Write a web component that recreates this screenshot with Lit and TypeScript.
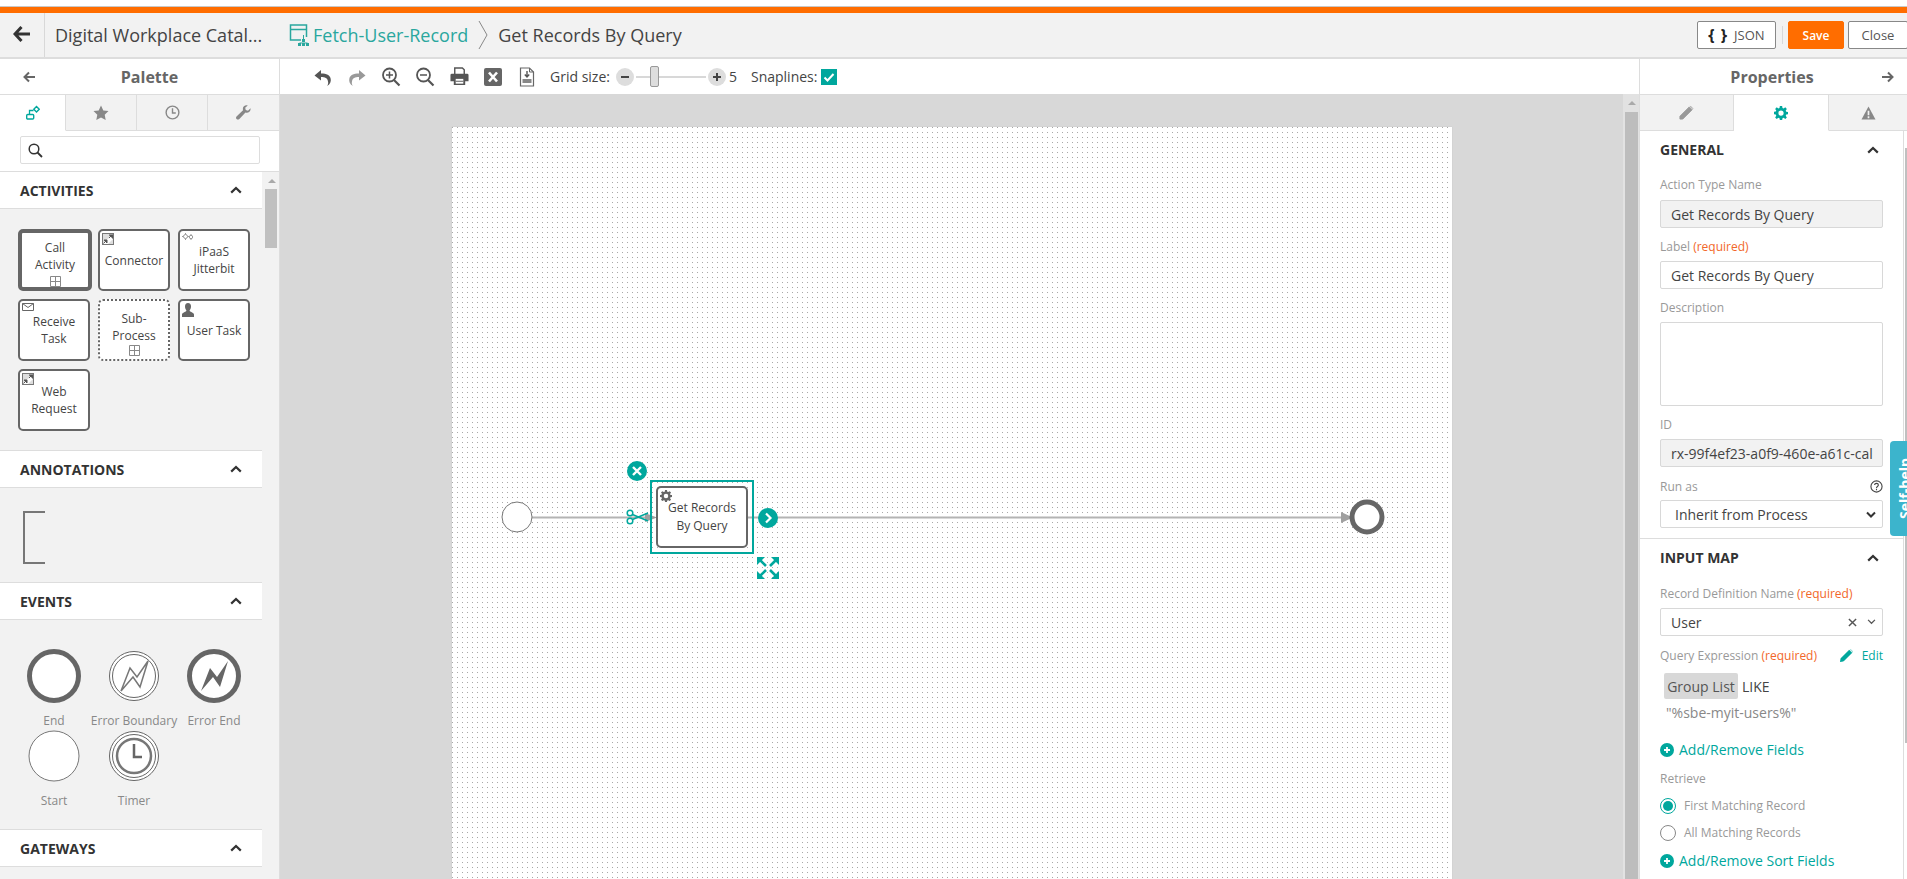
import { LitElement, html, css, svg } from "lit";
import { customElement } from "lit/decorators.js";

const chevUp = html`<svg class="chev" viewBox="0 0 12 8" width="12" height="8"><path d="M1.200 6.600 6 2l4.800 4.600" fill="none" stroke="#333" stroke-width="2.200"/></svg>`;

const expand = html`<svg class="expand" viewBox="0 0 11 11" width="11" height="11"><path d="M.5.5h10v10H.5zM5.500.5v10M.5 5.500h10" fill="none" stroke="#888" stroke-width="1"/></svg>`;
const connIcon = html`<svg class="ticon" viewBox="0 0 12 12" width="12" height="12"><rect width="12" height="12" fill="#777"/><rect x="1" y="1" width="10" height="10" fill="#ddd"/><path d="M1 11 11 1v5L6 11z" fill="#fff"/><path d="M1.500 10.500 5 7M2 7l3 0v3zM7 5l3.500-3.500M7 2h3.500v3.500" fill="#555" stroke="#555"/></svg>`;
const gearOutline = html`<svg class="ticon" viewBox="0 0 12 7" width="12" height="7"><g fill="none" stroke="#999" stroke-width="1"><circle cx="3.500" cy="3.500" r="2"/><circle cx="9" cy="4" r="1.700"/><path d="M3.500 0v1.500M3.500 5.500V7M0 3.500h1.500M5.500 3.500H7M9 1v1M9 6v1"/></g></svg>`;
const envelope = html`<svg class="ticon" viewBox="0 0 12 8" width="12" height="8"><path d="M.5.5h11v7H.5zM.5.5 6 4.500 11.500.5" fill="#fff" stroke="#666"/></svg>`;
const person = html`<svg class="ticon" viewBox="0 0 12 14" width="12" height="14"><path d="M6 0c2 0 3 1.500 3 3.500S8 7 7.500 7.800c0 1 4.500 1.700 4.500 3.700V14H0v-2.500c0-2 4.500-2.700 4.500-3.700C4 7 3 5.500 3 3.500S4 0 6 0z" fill="#666"/></svg>`;

const tiles = [
  { label: ["Call", "Activity"], kind: "call", exp: true },
  { label: ["Connector"], icon: connIcon, kind: "" },
  { label: ["iPaaS", "Jitterbit"], icon: gearOutline, kind: "" },
  { label: ["Receive", "Task"], icon: envelope, kind: "" },
  { label: ["Sub-", "Process"], kind: "sub", exp: true },
  { label: ["User Task"], icon: person, kind: "" },
  { label: ["Web", "Request"], icon: connIcon, kind: "" },
];

const eventIcons: Record<string, any> = {
  End: svg`<circle cx="27" cy="27" r="24.500" fill="#fff" stroke="#666" stroke-width="5"/>`,
  "Error Boundary": svg`<circle cx="27" cy="27" r="24.500" fill="#fff" stroke="#666" stroke-width="1"/><circle cx="27" cy="27" r="21.500" fill="#fff" stroke="#666" stroke-width="1"/><path d="M14 42 23 19l7 9 11-16-8 26-7-10z" fill="#fff" stroke="#777" stroke-width="1.500"/>`,
  "Error End": svg`<circle cx="27" cy="27" r="24.500" fill="#fff" stroke="#666" stroke-width="5"/><path d="M14 42 23 19l7 9 11-16-8 26-7-10z" fill="#666"/>`,
  Start: svg`<circle cx="27" cy="27" r="25" fill="#fff" stroke="#777" stroke-width="1"/>`,
  Timer: svg`<circle cx="27" cy="27" r="24.500" fill="#fff" stroke="#666" stroke-width="1"/><circle cx="27" cy="27" r="21.500" fill="#fff" stroke="#666" stroke-width="1"/><circle cx="27" cy="27" r="17" fill="#fff" stroke="#777" stroke-width="2.500"/><path d="M27 15v13h8" fill="none" stroke="#666" stroke-width="2.500"/>`,
};

const gear = (c: string, s: number) => html`<svg viewBox="0 0 16 16" width=${s} height=${s}><path fill=${c} fill-rule="evenodd" d="M6.700 0h2.600l.4 2.200 1.300.6L12.900 1.500l1.800 1.800-1.300 1.900.6 1.300 2 .3v2.600l-2 .4-.6 1.300 1.300 1.900-1.800 1.800-1.900-1.300-1.300.6-.4 2H6.700l-.4-2-1.300-.6-1.900 1.300-1.800-1.800 1.300-1.900-.6-1.300L0 9.300V6.700l2-.3.600-1.300L1.300 3.300l1.800-1.800L5 2.800l1.300-.6zM8 5a3 3 0 1 0 0 6 3 3 0 0 0 0-6z"/></svg>`;

const plusCircle = html`<svg viewBox="0 0 14 14" width="14" height="14"><circle cx="7" cy="7" r="7" fill="#00a79d"/><path d="M7 4v6M4 7h6" stroke="#fff" stroke-width="1.800"/></svg>`;

@customElement("app-root")
export class AppRoot extends LitElement {
  static styles = css`
    :host {
      display: flex;
      flex-direction: column;
      width: 100%;
      height: 100vh;
      overflow: hidden;
      font-family: "Open Sans", "Noto Sans", sans-serif;
      color: #333;
      background: #fff;
    }
    .topline { height: 7px; flex: none; border-bottom: 1px solid #c8c8c8; box-sizing: border-box; background: #fff; }
    .orange { height: 6px; flex: none; background: #ff6d00; }
    .header {
      height: 46px; flex: none; box-sizing: border-box; display: flex; align-items: center;
      background: #f2f2f2; border-bottom: 2px solid #ddd;
    }
    .back { width: 45px; height: 100%; flex: none; display: flex; align-items: center; justify-content: center; border-right: 1px solid #d8d8d8; box-sizing: border-box; padding-bottom: 2px; }
    .title { font-size: 18px; color: #444; margin-left: 10px; width: 209px; white-space: nowrap; }
    .crumb-ic { margin-left: 25px; width: 20px; height: 24px; flex: none; }
    .link { font-size: 18px; color: #2aa79e; margin-left: 4px; white-space: nowrap; }
    .sep { margin: 0 10px 0 10px; flex: none; }
    .cur { font-size: 18px; color: #444; white-space: nowrap; }
    .spacer { flex: 1; }
    .btn {
      height: 28px; box-sizing: border-box; font-size: 12px; display: flex; align-items: center; justify-content: center;
      border: 1px solid #888; background: #fff; color: #555; border-radius: 2px;
    }
    .json { width: 79px; gap: 6px; font-size: 13px; }
    .json b { font-size: 16px; color: #222; font-weight: 700; letter-spacing: 1px; line-height: 16px; }
    .vr { width: 1px; height: 18px; background: #d8d8d8; margin: 0 5px 0 6px; }
    .save { width: 56px; background: #ff6d00; border-color: #ff6d00; color: #fff; font-weight: 600; }
    .close { width: 60px; margin-left: 4px; margin-right: -1px; font-size: 13px; }

    .main { flex: 1; min-height: 0; display: flex; }
    .left { width: 280px; flex: none; box-sizing: border-box; border-right: 1px solid #ddd; display: flex; flex-direction: column; background: #fff; }
    .phead { height: 35px; flex: none; display: flex; align-items: center; position: relative; justify-content: center; font-weight: 700; color: #666; font-size: 16px; }
    .phead svg { position: absolute; top: 12px; }
    .phead.pl { padding-left: 20px; }
    .phead.pl svg { left: 23px; }
    .phead.pr svg { right: 13px; }
    .phead.pr { padding-right: 3px; }
    .tabs { display: flex; height: 37px; flex: none; border-top: 1px solid #ddd; box-sizing: border-box; }
    .tab { box-sizing: border-box; display: flex; align-items: center; justify-content: center; background: #f2f2f2; border-bottom: 1px solid #ddd; border-right: 1px solid #ddd; }
    .tab.on { background: #fff; border-bottom-color: #fff; }
    .left .tab { width: 71px; }
    .left .tab.on { width: 66px; }
    .left .tab:last-child { border-right: none; }
    .searchrow { height: 41px; flex: none; box-sizing: border-box; padding: 5px 20px 0 20px; border-bottom: 1px solid #ddd; }
    .search { width: 240px; height: 28px; box-sizing: border-box; border: 1px solid #ddd; border-radius: 2px; display: flex; align-items: center; padding-left: 7px; }
    .pbody { flex: 1; min-height: 0; display: flex; overflow: hidden; }
    .plist { width: 262px; flex: none; background: #f2f2f2; }
    .sec { height: 37px; box-sizing: border-box; display: flex; align-items: center; justify-content: space-between; background: #fff; padding: 0 20px 0 20px; font-size: 14px; font-weight: 700; color: #333; border-bottom: 1px solid #ddd; }
    .secbody { border-bottom: 1px solid #ddd; }
    .acts { display: grid; grid-template-columns: repeat(3, 72px); column-gap: 8px; row-gap: 8px; padding: 20px 0 20px 18px; height: 242px; box-sizing: border-box; align-content: start; }
    .tile {
      position: relative; height: 62px; box-sizing: border-box; background: #fff; border: 2px solid #666; border-radius: 5px;
      font-size: 12px; line-height: 17px; color: #444; display: flex; flex-direction: column; align-items: center; justify-content: center; text-align: center;
    }
    .tile.call { border-width: 4px; width: 74px; margin-right: -2px; justify-content: flex-start; padding-top: 6px; }
    .tile.call .expand { margin-top: 3px; }
    .tile.sub { border: 2px dotted #666; justify-content: flex-start; padding-top: 9px; }
    .tile.sub .expand { margin-top: 1px; }
    .tile .ticon { position: absolute; top: 2px; left: 2px; }
    .tile .expand { flex: none; }
    .annot { height: 95px; box-sizing: border-box; padding: 23px 0 0 23px; }
    .bracket { width: 22px; height: 53px; box-sizing: border-box; border: 2px solid #777; border-right: none; }
    .events { display: grid; grid-template-columns: repeat(3, 80px); height: 210px; box-sizing: border-box; padding: 29px 0 0 14px; grid-auto-rows: 80px; }
    .ev { display: flex; flex-direction: column; align-items: center; font-size: 12px; color: #888; white-space: nowrap; }
    .ev svg { flex: none; margin-bottom: 9px; }
    .scroll { flex: 1; background: #f2f2f2; position: relative; border-left: 1px solid #f2f2f2; }
    .scroll i { position: absolute; left: 2px; right: 2px; top: 17px; height: 59px; background: #c0c0c0; }
    .scroll u { position: absolute; left: 5px; top: 7px; width: 0; height: 0; border: 4px solid transparent; border-bottom: 4px solid #aaa; border-top: none; }

    .center { flex: 1; min-width: 0; display: flex; flex-direction: column; }
    .toolbar { height: 35px; flex: none; display: flex; align-items: center; background: #fff; font-size: 14px; color: #444; padding-left: 26px; }
    .tool { width: 34px; display: flex; justify-content: center; flex: none; }
    .gridlabel { margin-left: 6px; white-space: nowrap; }
    .rbtn { width: 18px; height: 18px; border-radius: 50%; background: #ddd; display: flex; align-items: center; justify-content: center; flex: none; }
    .minus { margin-left: 6px; }
    .track { width: 70px; height: 2px; background: #d8d8d8; position: relative; margin: 0 2px; flex: none; }
    .track i { position: absolute; left: 14px; top: -10px; width: 9px; height: 21px; box-sizing: border-box; background: #ddd; border: 1px solid #999; border-radius: 2px; }
    .val { margin-left: 3px; margin-right: 14px; }
    .check { width: 16px; height: 16px; background: #00a79d; margin-left: 4px; display: flex; align-items: center; justify-content: center; flex: none; }
    .canvaswrap { flex: 1; min-height: 0; display: flex; background: #d8d8d8; }
    .canvas { flex: 1; min-width: 0; overflow: hidden; padding: 33px 0 0 172px; }
    .paper { position: relative; width: 1000px; height: 800px; background: #fff; box-shadow: 0 0 1px #bbb; font-size: 12px; }
    .paper > svg { position: absolute; inset: 0; }
    .task {
      position: absolute; left: 204px; top: 359px; width: 92px; height: 62px; box-sizing: border-box;
      border: 2px solid #666; border-radius: 5px; background: #fff; color: #444; font-size: 12px; line-height: 18px;
      display: flex; align-items: center; justify-content: center; text-align: center;
    }
    .task svg { position: absolute; left: 2px; top: 2px; }
    .selbox { position: absolute; left: 198px; top: 353px; width: 104px; height: 74px; box-sizing: border-box; border: 2px solid #00a79d; }
    .vscroll { width: 16px; flex: none; position: relative; background: #e2e2e2; }
    .vscroll i { position: absolute; left: 2px; right: 1px; top: 18px; bottom: 0; background: #bdbdbd; }
    .vscroll u { position: absolute; left: 5px; top: 7px; width: 0; height: 0; border: 4px solid transparent; border-bottom: 4px solid #aaa; border-top: none; }

    .right { width: 268px; flex: none; box-sizing: border-box; border-left: 1px solid #ddd; display: flex; flex-direction: column; background: #fff; position: relative; }
    .right .tab { width: 95px; }
    .right .tab:first-child { width: 94px; }
    .right .tab:last-child { flex: 1; border-right: none; }
    .form { flex: 1; min-height: 0; position: relative; padding: 0 20px 0 20px; border-right: 1px solid #ddd; margin-right: 3px; box-sizing: border-box; overflow: hidden; }
    .fsec { display: flex; align-items: center; justify-content: space-between; height: 37px; font-size: 14px; font-weight: 700; color: #333; }
    .fsec svg { margin-right: 4px; }
    .lbl { display: flex; justify-content: space-between; align-items: center; font-size: 12px; height: 17px; line-height: 17px; color: #999; white-space: nowrap; }
    .req { color: #f2672a; }
    .inp { height: 28px; box-sizing: border-box; border: 1px solid #d8d8d8; border-radius: 2px; font-size: 14px; color: #444; display: flex; align-items: center; padding-left: 10px; white-space: nowrap; overflow: hidden; background: #fff; }
    .inp.ro { background: #f2f2f2; }
    .ta { height: 84px; box-sizing: border-box; border: 1px solid #d8d8d8; border-radius: 2px; }
    .sel { padding-right: 6px; justify-content: space-between; }
    .divider { height: 1px; background: #ddd; margin: 0 -20px 0 -20px; }
    .expr { display: flex; align-items: center; font-size: 14px; margin-left: 4px; color: #444; }
    .chip { background: #d8d8d8; color: #555; height: 26px; width: 74px; display: flex; align-items: center; justify-content: center; border-radius: 2px; margin-right: 4px; white-space: nowrap; }
    .str { font-size: 14px; color: #888; margin-left: 6px; }
    .edit { display: flex; align-items: center; gap: 9px; color: #00a79d; font-size: 12px; }
    .add { display: flex; align-items: center; gap: 5px; color: #00a79d; font-size: 14px; white-space: nowrap; }
    .radio { display: flex; align-items: center; gap: 8px; font-size: 12px; color: #999; height: 27px; white-space: nowrap; }
    .rd { width: 16px; height: 16px; border-radius: 50%; border: 1px solid #888; box-sizing: border-box; flex: none; display: flex; align-items: center; justify-content: center; }
    .rd.on { border-color: #00a79d; }
    .rd.on i { width: 10px; height: 10px; border-radius: 50%; background: #00a79d; }
    .selfhelp { position: absolute; right: 0; top: 382px; width: 17px; height: 95px; background: #3cb4cc; border-radius: 4px 0 0 4px; overflow: hidden; }
    .selfhelp span { position: absolute; left: 8px; top: 0; height: 95px; writing-mode: vertical-rl; transform: rotate(180deg); text-align: center; font-size: 14px; font-weight: 700; color: #fff; white-space: nowrap; line-height: 14px; }
    .fscroll { position: absolute; right: 0; top: 89px; width: 2px; height: 595px; background: #c0c0c0; }
  `;

  render() {
    return html`
      <div class="topline"></div>
      <div class="orange"></div>
      <div class="header">
        <div class="back"><svg viewBox="0 0 18 16" width="18" height="16"><path d="M8.500 1 2 8l6.500 7M2.500 8H17" fill="none" stroke="#333" stroke-width="3"/></svg></div>
        <div class="title">Digital Workplace Catal...</div>
        <svg class="crumb-ic" viewBox="0 0 20 24"><path d="M12 17H1.500V2h16v12M1.500 6.500h16" fill="none" stroke="#2aa79e" stroke-width="1.500"/><path d="M14.500 12v4M10.500 20h8" fill="none" stroke="#2aa79e"/><rect x="9" y="20" width="3" height="3" fill="#2aa79e"/><rect x="13" y="16" width="3" height="3" fill="#2aa79e"/><rect x="13" y="20" width="3" height="3" fill="#2aa79e"/><rect x="17" y="20" width="3" height="3" fill="#2aa79e"/></svg>
        <div class="link">Fetch-User-Record</div>
        <svg class="sep" viewBox="0 0 10 30" width="10" height="30"><path d="M1 1l8 14-8 14" fill="none" stroke="#888"/></svg>
        <div class="cur">Get Records By Query</div>
        <div class="spacer"></div>
        <div class="btn json"><b>{ }</b> JSON</div>
        <div class="vr"></div>
        <div class="btn save">Save</div>
        <div class="btn close">Close</div>
      </div>
      <div class="main">
        <div class="left">
          <div class="phead pl"><svg viewBox="0 0 12 12" width="12" height="12"><path d="M6 1.500 1.500 6 6 10.500M2 6h10" fill="none" stroke="#666" stroke-width="2"/></svg>Palette</div>
          <div class="tabs">
            <div class="tab on"><svg viewBox="0 0 14 15" width="14" height="15"><rect x=".7" y="9.500" width="7" height="4.500" rx="1" fill="none" stroke="#00a79d" stroke-width="1.400"/><path d="M3.500 9V5.500h4" fill="none" stroke="#00a79d" stroke-width="1.300"/><path d="M10.500 1.500l2.700 2.700-2.700 2.700-2.700-2.700z" fill="none" stroke="#00a79d" stroke-width="1.400"/></svg></div>
            <div class="tab"><svg viewBox="0 0 16 15" width="16" height="15"><path d="M8 .5l2.300 4.900 5.200.7-3.800 3.600 1 5.300L8 12.400l-4.700 2.600 1-5.300L.5 6.100l5.200-.7z" fill="#888"/></svg></div>
            <div class="tab"><svg viewBox="0 0 16 16" width="15" height="15"><circle cx="8" cy="8" r="6.800" fill="none" stroke="#888" stroke-width="1.500"/><path d="M8 3.500V8.500h3.500" fill="none" stroke="#888" stroke-width="1.500"/></svg></div>
            <div class="tab"><svg viewBox="0 0 16 16" width="15" height="15"><path d="M15.500 3.500 12.800 6l-2.400-.6L9.800 3 12.500.5c-2.400-.9-5.200.7-5.200 3.600 0 .5.100 1 .2 1.400L.8 12c-1 1-1 2.200-.2 3s2 .8 3-.2l6.500-6.700c2.800 1 6-1.300 5.400-4.600z" fill="#888"/></svg></div>
          </div>
          <div class="searchrow"><div class="search"><svg viewBox="0 0 15 15" width="15" height="15"><circle cx="6" cy="6" r="4.800" fill="none" stroke="#333" stroke-width="1.500"/><path d="M9.500 9.500l4.500 4.500" stroke="#333" stroke-width="1.800"/></svg></div></div>
          <div class="pbody">
            <div class="plist">
              <div class="sec">ACTIVITIES ${chevUp}</div>
              <div class="secbody acts">
                ${tiles.map((t) => html`<div class="tile ${t.kind}">${t.icon ?? ""}<div>${t.label.map((l) => html`<div>${l}</div>`)}</div>${t.exp ? expand : ""}</div>`)}
              </div>
              <div class="sec">ANNOTATIONS ${chevUp}</div>
              <div class="secbody annot"><div class="bracket"></div></div>
              <div class="sec">EVENTS ${chevUp}</div>
              <div class="secbody events">
                ${Object.keys(eventIcons).map((k) => html`<div class="ev"><svg viewBox="0 0 54 54" width="54" height="54">${eventIcons[k]}</svg>${k}</div>`)}
              </div>
              <div class="sec">GATEWAYS ${chevUp}</div>
            </div>
            <div class="scroll"><u></u><i></i></div>
          </div>
        </div>
        <div class="center">
          <div class="toolbar">
            <div class="tool"><svg viewBox="0 0 20 20" width="20" height="20"><path d="M8 3 1.500 8.500 8 13.500V10c4 0 6.500 1 7 4.500.5 1.500 0 3-.8 4.500 3-2 4-4.500 3.500-7-.7-4-4-5.500-9.700-5.500z" fill="#555"/></svg></div>
            <div class="tool"><svg viewBox="0 0 20 20" width="20" height="20"><path d="M12 3l6.500 5.500L12 13.500V10c-4 0-6.500 1-7 4.500-.5 1.500 0 3 .8 4.500-3-2-4-4.500-3.500-7C3 8 6.300 6.500 12 6.500z" fill="#999"/></svg></div>
            <div class="tool"><svg viewBox="0 0 20 20" width="20" height="20"><circle cx="8.500" cy="8" r="6.500" fill="none" stroke="#555" stroke-width="1.800"/><path d="M13 13l5.500 5.500" stroke="#555" stroke-width="2.200"/><path d="M8.500 4.500v7M5 8h7" stroke="#555" stroke-width="1.500"/></svg></div>
            <div class="tool"><svg viewBox="0 0 20 20" width="20" height="20"><circle cx="8.500" cy="8" r="6.500" fill="none" stroke="#555" stroke-width="1.800"/><path d="M13 13l5.500 5.500" stroke="#555" stroke-width="2.200"/><path d="M5 8h7" stroke="#555" stroke-width="1.500"/></svg></div>
            <div class="tool"><svg viewBox="0 0 20 20" width="19" height="19"><path d="M5 1h8l2 2v5H5z" fill="none" stroke="#555" stroke-width="1.500"/><path d="M2 7h16a1.500 1.500 0 0 1 1.500 1.500V15H16v4H4v-4H.5V8.500A1.500 1.500 0 0 1 2 7z" fill="#555"/><rect x="6" y="12.500" width="8" height="5" fill="#fff"/><path d="M6 15h8" stroke="#555"/></svg></div>
            <div class="tool"><svg viewBox="0 0 18 18" width="18" height="18"><rect width="18" height="18" rx="2" fill="#666"/><path d="M5 4.500l8 9M13 4.500l-8 9" stroke="#fff" stroke-width="2.600"/></svg></div>
            <div class="tool"><svg viewBox="0 0 16 20" width="16" height="20"><path d="M1.500 1h9l4 4v14h-13z" fill="#fff" stroke="#666" stroke-width="1.200"/><path d="M10.500 1v4h4" fill="none" stroke="#666"/><path d="M8 4v5M5.800 7.500 8 10l2.200-2.500" fill="none" stroke="#555" stroke-width="1.400"/><rect x="3.500" y="12" width="9" height="4" fill="#888"/></svg></div>
            <div class="gridlabel">Grid size:</div>
            <div class="rbtn minus"><svg viewBox="0 0 10 10" width="10" height="10"><path d="M1 5h8" stroke="#444" stroke-width="2"/></svg></div>
            <div class="track"><i></i></div>
            <div class="rbtn"><svg viewBox="0 0 10 10" width="10" height="10"><path d="M1 5h8M5 1v8" stroke="#444" stroke-width="2"/></svg></div>
            <div class="val">5</div>
            <div>Snaplines:</div>
            <div class="check"><svg viewBox="0 0 12 12" width="12" height="12"><path d="M1.500 6.500 4.500 9.500 10.500 3" fill="none" stroke="#fff" stroke-width="2"/></svg></div>
          </div>
          <div class="canvaswrap">
            <div class="canvas">
              <div class="paper">
                <svg width="1000" height="800">
                  <defs><pattern id="d" width="5" height="5" patternUnits="userSpaceOnUse"><rect x="0" y="0" width="1" height="1" fill="#a8a8a8"/></pattern></defs>
                  <rect width="1000" height="800" fill="url(#d)"/>
                  <path d="M80 390.500H196M296 390.500H890" stroke="#b4b4b4" stroke-width="2"/>
                  <path d="M193 386l12 4.500-12 4.500zM889 385l12 5.500-12 5.500z" fill="#a0a0a0"/>
                  <circle cx="65" cy="390" r="15" fill="#fff" stroke="#777" stroke-width="1"/>
                  <circle cx="915" cy="390" r="15" fill="#fff" stroke="#666" stroke-width="5"/>
                  <g fill="none" stroke="#00a79d" stroke-width="1.500"><circle cx="178" cy="386" r="2.800"/><circle cx="178" cy="394" r="2.800"/><path d="M180.500 387.500 196 394M180.500 392.500 196 386"/></g>
                  <circle cx="185" cy="344" r="10" fill="#00a79d"/>
                  <path d="M181 340l8 8M189 340l-8 8" stroke="#fff" stroke-width="2.400"/>
                  <circle cx="316" cy="391" r="10" fill="#00a79d"/>
                  <path d="M314 386.500l4.500 4.500-4.500 4.500" fill="none" stroke="#fff" stroke-width="2.200"/>
                  <g fill="#00a79d">
                    <path d="M305 430h8l-8 8z"/><path d="M327 430h-8l8 8z"/><path d="M305 452h8l-8-8z"/><path d="M327 452h-8l8-8z"/>
                  </g>
                  <path d="M308 433l6 6M324 433l-6 6M308 449l6-6M324 449l-6-6" stroke="#00a79d" stroke-width="2.600"/>
                </svg>
                <div class="selbox"></div>
                <div class="task">${gear("#666", 12)}<div>Get Records<br />By Query</div></div>
              </div>
            </div>
            <div class="vscroll"><u></u><i></i></div>
          </div>
        </div>
        <div class="right">
          <div class="phead pr">Properties<svg viewBox="0 0 12 12" width="12" height="12"><path d="M6 1.500 10.500 6 6 10.500M0 6h10" fill="none" stroke="#666" stroke-width="2"/></svg></div>
          <div class="tabs">
            <div class="tab"><svg viewBox="0 0 16 16" width="15" height="15"><path d="M1 12 11 2l3 3L4 15H1zM12 1l3 3" fill="#999" stroke="#999"/></svg></div>
            <div class="tab on">${gear("#00a79d", 14)}</div>
            <div class="tab"><svg viewBox="0 0 16 15" width="15" height="14"><path d="M8 .5 15.500 14.500H.5z" fill="#888"/><path d="M8 5v5M8 11v2" stroke="#f2f2f2" stroke-width="1.800"/></svg></div>
          </div>
          <div class="form">
            <div class="fsec">GENERAL ${chevUp}</div>
            <div class="lbl" style="margin-top:8px">Action Type Name</div>
            <div class="inp ro" style="margin-top:7px">Get Records By Query</div>
            <div class="lbl" style="margin-top:10px">Label&nbsp;<span class="req" style="margin-right:auto">(required)</span></div>
            <div class="inp" style="margin-top:6px">Get Records By Query</div>
            <div class="lbl" style="margin-top:10px">Description</div>
            <div class="ta" style="margin-top:6px"></div>
            <div class="lbl" style="margin-top:10px">ID</div>
            <div class="inp ro" style="margin-top:6px">rx-99f4ef23-a0f9-460e-a61c-cal</div>
            <div class="lbl" style="margin-top:11px">Run as<svg viewBox="0 0 14 14" width="13" height="13"><circle cx="7" cy="7" r="6" fill="none" stroke="#444" stroke-width="1.200"/><path d="M5 5.500c0-2.500 4-2.500 4 0 0 1.500-2 1.500-2 3M7 9.500v1.500" fill="none" stroke="#444" stroke-width="1.200"/></svg></div>
            <div class="inp sel" style="margin-top:5px;padding-left:14px">Inherit from Process<svg viewBox="0 0 10 7" width="10" height="7"><path d="M1 1.500 5 5.500 9 1.500" fill="none" stroke="#333" stroke-width="2"/></svg></div>
            <div class="divider" style="margin-top:10px"></div>
            <div class="fsec">INPUT MAP ${chevUp}</div>
            <div class="lbl" style="margin-top:9px">Record Definition Name&nbsp;<span class="req" style="margin-right:auto">(required)</span></div>
            <div class="inp sel" style="margin-top:6px">User<span style="display:flex;align-items:center;gap:10px"><svg viewBox="0 0 10 10" width="9" height="9"><path d="M1 1l8 8M9 1l-8 8" stroke="#555" stroke-width="1.600"/></svg><svg viewBox="0 0 10 7" width="9" height="6"><path d="M1 1l4 4 4-4" fill="none" stroke="#555" stroke-width="1.400"/></svg></span></div>
            <div class="lbl" style="margin-top:11px"><span>Query Expression <span class="req">(required)</span></span><span class="edit"><svg viewBox="0 0 14 14" width="13" height="13"><path d="M0 14l1-4L10 1l3 3-9 9zM11 0l3 3" fill="#00a79d" stroke="#00a79d" stroke-width=".5"/></svg>Edit</span></div>
            <div class="expr" style="margin-top:9px"><div class="chip">Group List</div>LIKE</div>
            <div class="str" style="margin-top:4px">"%sbe-myit-users%"</div>
            <div class="add" style="margin-top:18px">${plusCircle}Add/Remove Fields</div>
            <div class="lbl" style="margin-top:11px">Retrieve</div>
            <div class="radio" style="margin-top:5px"><div class="rd on"><i></i></div>First Matching Record</div>
            <div class="radio"><div class="rd"></div>All Matching Records</div>
            <div class="add" style="margin-top:5px">${plusCircle}Add/Remove Sort Fields</div>
          </div>
          <div class="fscroll"></div>
          <div class="selfhelp"><span>Self-help</span></div>
        </div>
      </div>
    `;
  }
}
